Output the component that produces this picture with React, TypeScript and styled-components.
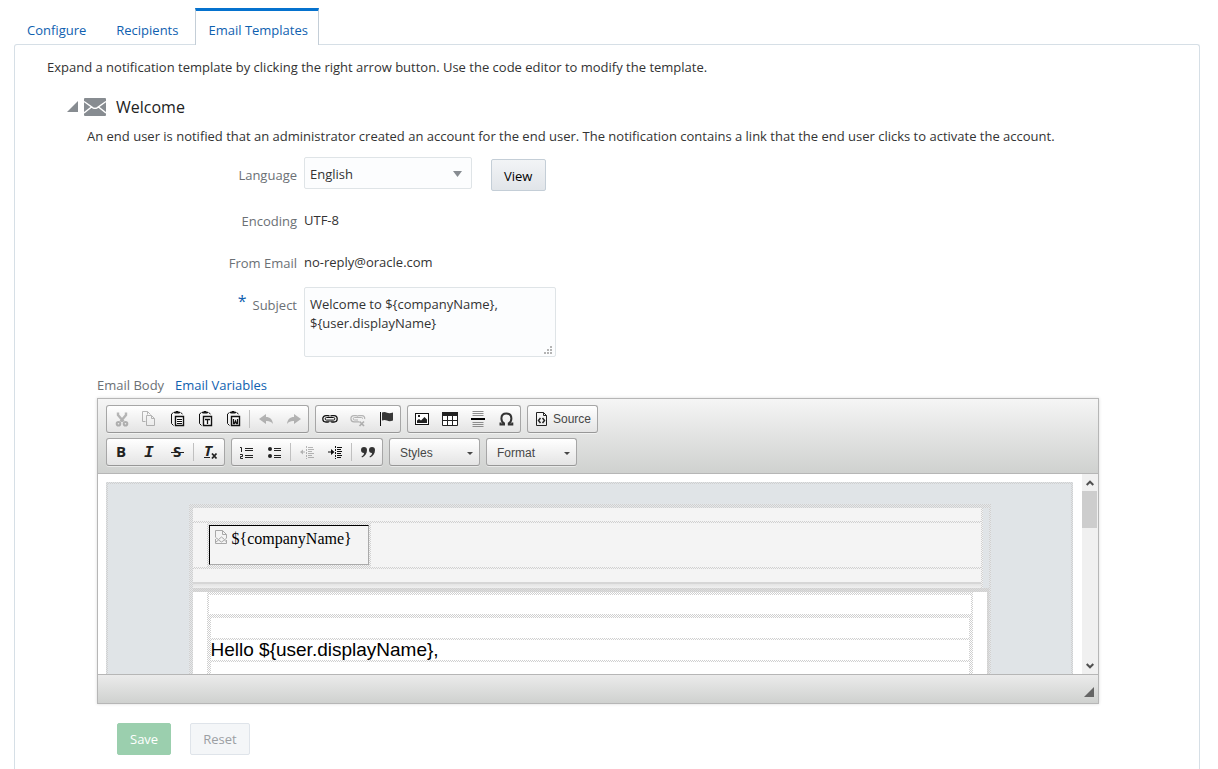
import React from "react";
import styled, { createGlobalStyle, css } from "styled-components";

const GlobalStyle = createGlobalStyle`
  * { box-sizing: border-box; }
  body { margin: 0; background: #fff; }
  body, button, select, textarea {
    font-family: "Open Sans", "Noto Sans", sans-serif;
    font-size: 13px;
    line-height: 20px;
    color: #333;
  }
`;

const line = "#d6dfe6";
const linkBlue = "#0f61b0";
const editorLine = "#b6b6b6";

const Page = styled.div`
  display: flex;
  flex-direction: column;
  min-height: 100vh;
  padding: 8px 18px 0 14px;
`;

const TabBar = styled.nav`
  display: flex;
  gap: 4px;
  height: 36px;
`;

const Tab = styled.a<{ $active?: boolean }>`
  display: flex;
  align-items: center;
  justify-content: center;
  height: 37px;
  padding: 5px 12px 0;
  border: 1px solid transparent;
  border-bottom: 0;
  color: ${linkBlue};
  text-decoration: none;
  white-space: nowrap;
  ${(p) =>
    p.$active &&
    css`
      position: relative;
      padding: 3px 10px 0 12px;
      background: #fff;
      border-color: #c4ced7;
      border-top: 3px solid #0572ce;
    `}
`;

const Panel = styled.main`
  flex: 1;
  border: 1px solid ${line};
  border-bottom: 0;
  border-radius: 3px 3px 0 0;
  padding: 12px 100px 14px 32px;
`;

const Intro = styled.p`
  margin: 0;
`;

const SectionHead = styled.div`
  display: flex;
  align-items: center;
  height: 24px;
  margin: 18px 0 0 20px;
`;

const Disclosure = styled.button`
  display: flex;
  padding: 0 0 2px;
  margin-right: 6px;
  border: 0;
  background: none;
`;

const SectionTitle = styled.h2`
  margin: 0 0 0 10px;
  font-size: 16px;
  line-height: 24px;
  font-weight: 400;
  color: #222;
`;

const Description = styled.p`
  margin: 7px -40px 0 40px;
`;

const Form = styled.div`
  display: grid;
  grid-template-columns: 250px 1fr;
  column-gap: 7px;
  margin-top: 11px;
`;

const Label = styled.label<{ $top?: number }>`
  padding-top: ${(p) => p.$top ?? 0}px;
  text-align: right;
  color: #6b7075;
`;

const Required = styled.span`
  margin-right: 6px;
  font-size: 16px;
  line-height: 16px;
  vertical-align: 3px;
  color: ${linkBlue};
`;

const Row = styled.div`
  display: flex;
  height: 53px;
`;

const Value = styled.output<{ $height: number }>`
  height: ${(p) => p.$height}px;
`;

const SelectBox = styled.div`
  position: relative;
  width: 168px;
  height: 32px;
  svg { position: absolute; right: 10px; top: 14px; pointer-events: none; }
`;

const Select = styled.select`
  appearance: none;
  width: 100%;
  height: 32px;
  padding: 2px 24px 0 5px;
  border: 1px solid #dfe4e7;
  border-radius: 2px;
  background: #fcfdfe;
`;

const ViewButton = styled.button`
  height: 32px;
  margin: 2px 0 0 19px;
  padding: 2px 13px 0 12px;
  border: 1px solid #c4ced7;
  border-radius: 2px;
  background: linear-gradient(#f2f4f6, #e1e5e9);
  color: #000;
`;

const SubjectBox = styled.div`
  position: relative;
  width: 252px;
  height: 70px;
  svg { position: absolute; right: 4px; bottom: 3px; pointer-events: none; }
`;

const SubjectInput = styled.textarea`
  display: block;
  width: 100%;
  height: 100%;
  padding: 7px 5px;
  line-height: 19px;
  border: 1px solid #dfe4e7;
  border-radius: 2px;
  background: #fcfdfe;
  resize: none;
  overflow: hidden;
`;

const BodyHead = styled.div`
  display: flex;
  gap: 11px;
  margin: 18px 0 3px 50px;
  color: #6b7075;
`;

const Link = styled.a`
  color: ${linkBlue};
  text-decoration: none;
`;

const Editor = styled.section`
  margin-left: 50px;
  border: 1px solid ${editorLine};
  box-shadow: 0 0 3px rgba(0, 0, 0, 0.15);
`;

const Toolbar = styled.div`
  display: flex;
  flex-direction: column;
  gap: 5px;
  padding: 6px 8px 7px;
  border-bottom: 1px solid ${editorLine};
  background: linear-gradient(#f5f5f5, #cfd1cf);
`;

const ToolRow = styled.div`
  display: flex;
  gap: 6px;
`;

const ToolGroup = styled.div`
  display: flex;
  height: 28px;
  border: 1px solid #a6a6a6;
  border-bottom-color: #979797;
  border-radius: 3px;
  background: linear-gradient(#fff, #e4e4e4);
  box-shadow: 0 1px 0 rgba(255, 255, 255, 0.5);
`;

const ToolButton = styled.button`
  display: flex;
  align-items: center;
  gap: 3px;
  height: 26px;
  padding: 0 6px;
  border: 0;
  background: none;
  font-family: "Liberation Sans", Arial, sans-serif;
  font-size: 12px;
  color: #474747;
  svg { display: block; overflow: visible; }
  &:disabled { opacity: 0.3; }
`;

const Separator = styled.span`
  width: 1px;
  height: 18px;
  margin: 4px 2px;
  background: #c0c0c0;
`;

const ComboButton = styled(ToolButton)`
  justify-content: space-between;
  width: 89px;
  padding: 2px 6px 0 10px;
`;

const Viewport = styled.div`
  display: flex;
  height: 200px;
  overflow: hidden;
  background: #fff;
`;

const Document = styled.div`
  flex: 1;
  padding: 8px 9px 0 8px;
`;

const Guide = styled.div<{ $pad: string; $bg?: string }>`
  padding: ${(p) => p.$pad};
  background: repeating-conic-gradient(#d0d0d0 0 25%, transparent 0 50%) 0 0 / 2px 2px
    ${(p) => p.$bg ?? "#fff"};
`;

const Canvas = styled.div`
  display: flex;
  flex-direction: column;
  align-items: center;
  height: 300px;
  padding-top: 20px;
  background: #e0e4e7;
`;

const Mail = styled(Guide)`
  width: 802px;
`;

const HeaderArea = styled.div`
  padding-right: 6px;
  background: #e0e4e7;
`;

const Cell = styled.div<{ $height: number; $bg?: string; $indent?: number }>`
  height: ${(p) => p.$height}px;
  padding-left: ${(p) => p.$indent ?? 0}px;
  background: ${(p) => p.$bg ?? "#fff"};
`;

const HeaderShade = styled.div`
  height: 6px;
  border-top: 2px solid #d6d6d6;
  background: linear-gradient(#e4e4e4, #f0f0f0);
`;

const LogoGuide = styled(Guide)`
  width: 164px;
`;

const Logo = styled.div`
  display: flex;
  align-items: flex-start;
  gap: 5px;
  width: 160px;
  height: 40px;
  padding: 4px 5px;
  border: 1px solid #aaa;
  border-top-color: #000;
  border-left-color: #000;
  background: #f4f4f4;
  font-family: "Liberation Serif", "Times New Roman", serif;
  font-size: 16px;
  line-height: 17px;
  color: #000;
`;

const MailBody = styled.div`
  padding: 0 14px;
  background: #fff;
`;

const Greeting = styled(Cell)`
  font-family: "Liberation Sans", Arial, sans-serif;
  font-size: 19px;
  line-height: 20px;
  white-space: nowrap;
  color: #000;
`;

const Scrollbar = styled.div`
  display: flex;
  flex-direction: column;
  align-items: center;
  width: 16px;
  background: #f0f0f0;
`;

const ScrollButton = styled.button`
  display: flex;
  justify-content: center;
  align-items: center;
  width: 16px;
  height: 17px;
  padding: 0 1px 0 0;
  border: 0;
  background: none;
`;

const Thumb = styled.div`
  width: 15px;
  height: 37px;
  margin-right: 1px;
  margin-bottom: auto;
  background: #cdcdcd;
`;

const Footer = styled.div`
  display: flex;
  justify-content: flex-end;
  align-items: flex-end;
  height: 29px;
  padding: 0 4px 6px;
  border-top: 1px solid ${editorLine};
  background: linear-gradient(#ebebeb, #cfd1cf);
`;

const Actions = styled.div`
  display: flex;
  gap: 19px;
  margin: 19px 0 0 70px;
`;

const ActionButton = styled.button<{ $primary?: boolean }>`
  height: 32px;
  padding: 0 12px;
  border: 1px solid ${(p) => (p.$primary ? "#9bcfae" : "#dfe4ea")};
  border-radius: 2px;
  background: ${(p) => (p.$primary ? "#9bcfae" : "#f4f6f8")};
  color: ${(p) => (p.$primary ? "#fff" : "#9c9fa3")};
`;

const dark = "#222";

const icons: Record<string, React.ReactNode> = {
  Cut: (
    <g fill="none" stroke={dark}>
      <path d="M5 1.500v2.500l5.500 6.500M13 1.500v2.500L7.500 10.500" strokeWidth="2.400" />
      <circle cx="5.500" cy="12.700" r="1.800" strokeWidth="2" />
      <circle cx="12.500" cy="12.700" r="1.800" strokeWidth="2" />
    </g>
  ),
  Copy: (
    <g fill="none" stroke={dark}>
      <path d="M4.500 10.500h-3V.5h5l3 3M6.500.5v3" />
      <path d="M5.500 4.500h5l3 3v7h-8zM10.500 4.500v3h3" />
    </g>
  ),
  Undo: <path d="M1 8l7-5v3c4 0 6.500 2.500 7 7-2-2.500-4-3.200-7-3v3z" fill={dark} />,
  Redo: <path d="M15 8L8 3v3c-4 0-6.500 2.500-7 7 2-2.500 4-3.200 7-3v3z" fill={dark} />,
  Link: (
    <g fill="none" stroke="#111" strokeWidth="1.300">
      <path d="M7.500 5.200A2 2 0 0 0 6 4.600H4a2.700 2.700 0 0 0 0 6.400h2a2 2 0 0 0 1.500-.6M8.500 5.200A2 2 0 0 1 10 4.600h2a2.700 2.700 0 0 1 0 6.400h-2a2 2 0 0 1-1.500-.6" />
      <path d="M4.500 6.500h7a1.200 1.200 0 0 1 0 2.600h-7a1.200 1.200 0 0 1 0-2.600z" strokeWidth="1" />
    </g>
  ),
  Unlink: (
    <g fill="none" stroke={dark} strokeWidth="1.200">
      <path d="M9 10.800H4a2.800 2.800 0 0 1 0-6.200h2a2 2 0 0 1 1.500.6 2 2 0 0 1 1.500-.6h3a2.700 2.700 0 0 1 2.600 3.400" />
      <path d="M8 9H4.500a1.200 1.200 0 0 1 0-2.500h7a1 1 0 0 1 1 1.200" strokeWidth="1" />
      <path d="M9.500 10.500l4.500 4.500M14 10.500l-4.500 4.500" strokeWidth="1.700" />
    </g>
  ),
  Anchor: (
    <g>
      <path d="M2 1h1v14H2z" fill="#111" />
      <path d="M4 1.500c2-1 3.500-.5 5 .3 1.500.7 3.500.7 6-.3v8c-2.500 1-4.500.8-6 .1-1.500-.7-3-1-5 0z" fill="#383838" />
    </g>
  ),
  Image: (
    <g>
      <rect x="1.500" y="2.500" width="13" height="11" fill="#fff" stroke="#111" />
      <rect x="4" y="4" width="2" height="2" fill={dark} />
      <path d="M3 12V9.500l2-1.500 2 1.500L10.500 6 13 8.500V12z" fill={dark} />
    </g>
  ),
  Table: (
    <g>
      <path d="M.5 4.500h15v10H.5zM5.500 4v10.500M10.500 4v10.500M.5 9.500h15" fill="#fff" stroke={dark} />
      <path d="M0 1h16v4H0z" fill={dark} />
    </g>
  ),
  "Horizontal line": (
    <g>
      <path d="M2.500 .5h11M2.500 2.500h11M2.500 4.500h11M2.500 11.500h11M2.500 13.500h11M2.500 15.500h11" stroke="#8c8c8c" />
      <path d="M1 7h14v2H1z" fill="#000" />
    </g>
  ),
  "Special character": (
    <path
      d="M2.500 11.500v2H6v-1.200C4 11 3.400 9.400 3.400 7.400 3.400 4.400 5.500 2.600 8.400 2.600s5 1.800 5 4.800c0 2-.6 3.600-2.600 4.900v1.200h3.500v-2"
      fill="none"
      stroke="#333"
      strokeWidth="2"
    />
  ),
  "Numbered list": (
    <g fill={dark}>
      <path d="M7 4h8v1H7zM7 6h8v1H7zM7 11h8v1H7zM7 13h8v1H7z" />
      <path d="M2 3.500h1.500V8M2 10.500h2.500v2H2.500v2H5" fill="none" stroke={dark} />
    </g>
  ),
  "Bulleted list": (
    <g fill={dark}>
      <circle cx="4" cy="5" r="2" />
      <circle cx="4" cy="12" r="2" />
      <path d="M8 4h7v1H8zM8 6h7v1H8zM8 11h7v1H8zM8 13h7v1H8z" />
    </g>
  ),
  Outdent: (
    <g fill={dark}>
      <path d="M9 3h5v1H9zM9 5h6v1H9zM9 7h4v1H9zM9 9h6v1H9zM9 11h4v1H9zM9 13h6v1H9z" />
      <path d="M7.500 2v13" stroke={dark} strokeDasharray="2 1" />
      <path d="M1 8l3-2.500v2h2v1H4v2z" />
    </g>
  ),
  Indent: (
    <g fill="#111">
      <path d="M10 3h5v1h-5zM10 5h4v1h-4zM10 7h5v1h-5zM10 9h4v1h-4zM10 11h5v1h-5zM10 13h4v1h-4z" />
      <path d="M8.500 2v13" stroke="#111" strokeDasharray="2 1" />
      <path d="M7.500 8L4 5v2.500H1v1h3V11z" />
    </g>
  ),
  Quote: (
    <g fill="#333">
      <path d="M4 3a3 3 0 0 1 3 3c0 3.500-1.800 6.300-5 7.500l-.5-1C3.200 11.600 4 10.500 4 9a3 3 0 0 1 0-6z" />
      <path d="M12 3a3 3 0 0 1 3 3c0 3.500-1.800 6.300-5 7.500l-.5-1C11.200 11.600 12 10.500 12 9a3 3 0 0 1 0-6z" />
    </g>
  ),
  Source: (
    <g fill="none" stroke={dark}>
      <path d="M2.500 1.500h7l3 3v10h-10zM9.500 1.500v3h3" />
      <path d="M6.500 7L4.500 9.500l2 2.500M8.500 7l2 2.500-2 2.500" strokeWidth="1.500" />
    </g>
  ),
};

const pasteMarks: Record<string, React.ReactNode> = {
  Paste: <path d="M8 8.500h5M8 10.500h5M8 12.500h5" />,
  "Paste as text": <path d="M8 8.500h5M10.500 8v5" strokeWidth="1.300" />,
  "Paste from Word": <path d="M8.500 8v4.500h1l1-2.500 1 2.500h1V8" strokeWidth="1.300" />,
};

function PasteIcon({ kind }: { kind: string }) {
  return (
    <g fill="none" stroke="#111">
      <path d="M4.500 1.500l-2 1.500v9.500l2 2M11.500 1.500l2 1.500" />
      <path d="M5.500 2V1h1L7 .5h2l.5.5h1v1z" fill={dark} />
      <path d="M6.500 5.500h8v9h-8z" fill="#fff" strokeWidth="1.400" />
      {pasteMarks[kind]}
    </g>
  );
}

const sans = '"Open Sans", sans-serif';
const mono = '"Liberation Mono", monospace';

const letterIcons: Record<string, React.ReactNode> = {
  Bold: <text x="3" y="13" fontFamily={sans} fontSize="15" fontWeight="700">B</text>,
  Italic: <text x="3" y="13" fontFamily={mono} fontSize="16" fontWeight="700" fontStyle="italic">I</text>,
  Strikethrough: (
    <g>
      <text x="4" y="13" fontFamily={sans} fontSize="15" fontWeight="700">S</text>
      <path d="M2 8h13v1H2z" />
    </g>
  ),
  "Remove format": (
    <g>
      <text x="2" y="12" fontFamily={sans} fontSize="15" fontWeight="700" fontStyle="italic">T</text>
      <path d="M2 13h6v1H2z" />
      <path d="M10 9.500l4.500 5M14.500 9.500l-4.500 5" stroke={dark} strokeWidth="1.800" />
    </g>
  ),
};

function Tool({ name, disabled, text }: { name: string; disabled?: boolean; text?: string }) {
  return (
    <ToolButton type="button" title={name} aria-label={name} disabled={disabled}>
      <svg width="16" height="16" viewBox="0 0 16 16" fill={dark} aria-hidden="true">
        {icons[name] ?? letterIcons[name] ?? <PasteIcon kind={name} />}
      </svg>
      {text}
    </ToolButton>
  );
}

function Combo({ label }: { label: string }) {
  return (
    <ToolGroup>
      <ComboButton type="button" aria-haspopup="listbox">
        {label}
        <svg width="6" height="3" viewBox="0 0 6 3" aria-hidden="true">
          <path d="M0 0h6L3 3z" fill="#474747" />
        </svg>
      </ComboButton>
    </ToolGroup>
  );
}

function EmailEditor() {
  const grey = "#f4f4f4";
  return (
    <Editor aria-label="Email Body">
      <Toolbar role="toolbar">
        <ToolRow>
          <ToolGroup>
            <Tool name="Cut" disabled />
            <Tool name="Copy" disabled />
            <Tool name="Paste" />
            <Tool name="Paste as text" />
            <Tool name="Paste from Word" />
            <Separator />
            <Tool name="Undo" disabled />
            <Tool name="Redo" disabled />
          </ToolGroup>
          <ToolGroup>
            <Tool name="Link" />
            <Tool name="Unlink" disabled />
            <Tool name="Anchor" />
          </ToolGroup>
          <ToolGroup>
            <Tool name="Image" />
            <Tool name="Table" />
            <Tool name="Horizontal line" />
            <Tool name="Special character" />
          </ToolGroup>
          <ToolGroup>
            <Tool name="Source" text="Source" />
          </ToolGroup>
        </ToolRow>
        <ToolRow>
          <ToolGroup>
            <Tool name="Bold" />
            <Tool name="Italic" />
            <Tool name="Strikethrough" />
            <Separator />
            <Tool name="Remove format" />
          </ToolGroup>
          <ToolGroup>
            <Tool name="Numbered list" />
            <Tool name="Bulleted list" />
            <Separator />
            <Tool name="Outdent" disabled />
            <Tool name="Indent" />
            <Separator />
            <Tool name="Quote" />
          </ToolGroup>
          <Combo label="Styles" />
          <Combo label="Format" />
        </ToolRow>
      </Toolbar>
      <Viewport>
        <Document>
          <Guide $pad="2px 2px 0" $bg="#e0e4e7">
            <Canvas>
              <Mail $pad="4px 2px 0 4px" $bg="#e6e8ea">
                <HeaderArea>
                  <Guide $pad="0 2px 0 0" $bg={grey}>
                    <Cell $height={13} $bg={grey} />
                    <Guide $pad="2px 0" $bg={grey}>
                      <Cell $height={44} $bg={grey} $indent={14}>
                        <LogoGuide $pad="2px" $bg={grey}>
                          <Logo>
                            <svg width="12" height="14" viewBox="0 0 12 14" fill="none" stroke="#a8a8a8" aria-hidden="true">
                              <path d="M.5 7V.5h7l4 4V8M7.500.5v4h4M.5 9v4.500h11V10M.5 7.500l3 2 3-2.500 3 2.500 2-1M1 12l2.500-2 3 2 3-2 2 2" />
                            </svg>
                            {"${companyName}"}
                          </Logo>
                        </LogoGuide>
                      </Cell>
                    </Guide>
                    <Cell $height={13} $bg={grey} />
                    <HeaderShade />
                  </Guide>
                </HeaderArea>
                <Guide $pad="4px 2px 0 0" $bg="#dcdcdc">
                  <MailBody>
                    <Guide $pad="3px 2px 0">
                      <Cell $height={19} />
                      <Guide $pad="4px 2px 0">
                        <Cell $height={20} />
                        <Guide $pad="2px 0">
                          <Greeting $height={20}>{"Hello ${user.displayName},"}</Greeting>
                        </Guide>
                        <Cell $height={60} />
                      </Guide>
                    </Guide>
                  </MailBody>
                </Guide>
              </Mail>
            </Canvas>
          </Guide>
        </Document>
        <Scrollbar>
          <ScrollButton type="button" aria-label="Scroll up">
            <svg width="8" height="6" viewBox="0 0 8 6" fill="none" stroke="#505050" strokeWidth="2">
              <path d="M.7 5L4 1.700 7.300 5" />
            </svg>
          </ScrollButton>
          <Thumb />
          <ScrollButton type="button" aria-label="Scroll down">
            <svg width="8" height="6" viewBox="0 0 8 6" fill="none" stroke="#505050" strokeWidth="2">
              <path d="M.7 1L4 4.300 7.300 1" />
            </svg>
          </ScrollButton>
        </Scrollbar>
      </Viewport>
      <Footer>
        <svg width="10" height="10" viewBox="0 0 10 10" aria-hidden="true">
          <path d="M10 0v10H0z" fill="#656565" />
        </svg>
      </Footer>
    </Editor>
  );
}

export default function App() {
  return (
    <>
      <GlobalStyle />
      <Page>
        <TabBar>
          <Tab href="#configure">Configure</Tab>
          <Tab href="#recipients">Recipients</Tab>
          <Tab href="#templates" $active aria-current="page">Email Templates</Tab>
        </TabBar>
        <Panel>
          <Intro>
            Expand a notification template by clicking the right arrow button. Use the code editor to modify the template.
          </Intro>
          <SectionHead>
            <Disclosure type="button" aria-label="Collapse Welcome" aria-expanded="true">
              <svg width="11" height="11" viewBox="0 0 11 11">
                <path d="M11 0v11H0z" fill="#878c91" />
              </svg>
            </Disclosure>
            <svg width="22" height="18" viewBox="0 0 22 18" aria-hidden="true">
              <rect width="22" height="18" rx="1" fill="#878c91" />
              <path d="M0 3.500l9 6.300q2 1.200 4 0l9-6.300M0 15l7.500-6M22 15l-7.500-6" fill="none" stroke="#fff" strokeWidth="1.400" />
            </svg>
            <SectionTitle>Welcome</SectionTitle>
          </SectionHead>
          <Description>
            An end user is notified that an administrator created an account for the end user. The notification contains a link that the end user clicks to activate the account.
          </Description>
          <Form>
            <Label htmlFor="language" $top={8}>Language</Label>
            <Row>
              <SelectBox>
                <Select id="language" defaultValue="English">
                  <option>English</option>
                </Select>
                <svg width="9" height="6" viewBox="0 0 9 6" aria-hidden="true">
                  <path d="M0 0h9L4.500 6z" fill="#878c91" />
                </svg>
              </SelectBox>
              <ViewButton type="button">View</ViewButton>
            </Row>
            <Label htmlFor="encoding" $top={1}>Encoding</Label>
            <Value id="encoding" $height={42}>UTF-8</Value>
            <Label htmlFor="from" $top={1}>From Email</Label>
            <Value id="from" $height={35}>no-reply@oracle.com</Value>
            <Label htmlFor="subject" $top={6}>
              <Required aria-hidden="true">*</Required>Subject
            </Label>
            <SubjectBox>
              <SubjectInput id="subject" defaultValue={"Welcome to ${companyName}, ${user.displayName}"} />
              <svg width="8" height="8" viewBox="0 0 8 8" fill="#b4b4b4" aria-hidden="true">
                <path d="M6 0h2v2H6zM3 3h2v2H3zM6 3h2v2H6zM0 6h2v2H0zM3 6h2v2H3zM6 6h2v2H6z" />
              </svg>
            </SubjectBox>
          </Form>
          <BodyHead>
            <span>Email Body</span>
            <Link href="#variables">Email Variables</Link>
          </BodyHead>
          <EmailEditor />
          <Actions>
            <ActionButton type="button" $primary disabled>Save</ActionButton>
            <ActionButton type="button" disabled>Reset</ActionButton>
          </Actions>
        </Panel>
      </Page>
    </>
  );
}
